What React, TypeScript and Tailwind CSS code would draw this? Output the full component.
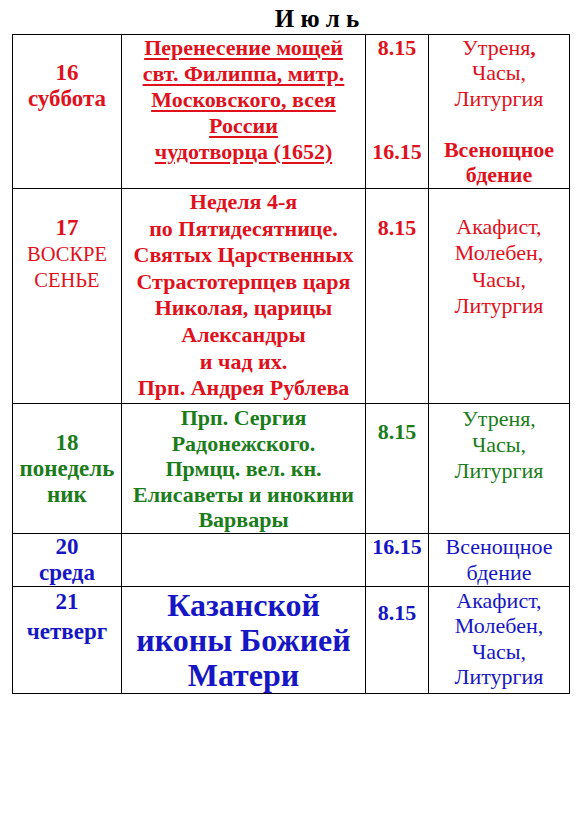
import React from 'react';

const RED = 'text-[#e0101c]';
const GREEN = 'text-[#1b7c1b]';
const BLUE = 'text-[#1616c4]';

const cell = 'border border-black align-top text-center p-0';
const day = 'text-[23px] leading-[26px]';

export default function App() {
  return (
    <div className="min-h-screen bg-white [font-family:'Liberation_Serif',serif] text-[22px] leading-[26px]">
      <div className="w-[557px] ml-[12px]">
        <h1 className="h-[34px] pl-[53px] pt-[5px] text-center text-[25px] leading-[28px] font-bold text-black">
          И ю л ь
        </h1>
        <table className="w-[557px] border-collapse table-fixed">
          <colgroup>
            <col className="w-[109px]" />
            <col className="w-[244px]" />
            <col className="w-[63px]" />
            <col className="w-[141px]" />
          </colgroup>
          <tbody>
            {/* 16 */}
            <tr className={`h-[154px] ${RED}`}>
              <td className={`${cell} ${day} pt-[25px] font-bold`}>
                <div>16</div>
                <div>суббота</div>
              </td>
              <td className={`${cell} font-bold underline decoration-[2px] underline-offset-[3px]`}>
                <div>Перенесение мощей</div>
                <div>свт. Филиппа, митр.</div>
                <div>Московского, всея</div>
                <div>России</div>
                <div>чудотворца (1652)</div>
              </td>
              <td className={`${cell} font-bold`}>
                <div>8.15</div>
                <div className="h-[78px]" />
                <div>16.15</div>
              </td>
              <td className={`${cell} leading-[25.4px]`}>
                <div>Утреня<span className="font-bold">,</span></div>
                <div>Часы,</div>
                <div>Литургия</div>
                <div className="h-[25.4px]" />
                <div className="font-bold">Всенощное</div>
                <div className="font-bold">бдение</div>
              </td>
            </tr>
            {/* 17 */}
            <tr className={`h-[215px] ${RED}`}>
              <td className={`${cell} pt-[26px]`}>
                <div className={`${day} font-bold`}>17</div>
                <div className="text-[20.5px]">ВОСКРЕ</div>
                <div className="text-[20.5px]">СЕНЬЕ</div>
              </td>
              <td className={`${cell} font-bold leading-[26.6px]`}>
                <div>Неделя 4-я</div>
                <div>по Пятидесятнице.</div>
                <div>Святых Царственных</div>
                <div>Страстотерпцев царя</div>
                <div>Николая, царицы</div>
                <div>Александры</div>
                <div>и чад их.</div>
                <div>Прп. Андрея Рублева</div>
              </td>
              <td className={`${cell} pt-[26px] font-bold`}>8.15</td>
              <td className={`${cell} pt-[25px] leading-[26.3px]`}>
                <div>Акафист,</div>
                <div>Молебен,</div>
                <div>Часы,</div>
                <div>Литургия</div>
              </td>
            </tr>
            {/* 18 */}
            <tr className={`h-[130px] ${GREEN}`}>
              <td className={`${cell} ${day} pt-[26px] font-bold`}>
                <div>18</div>
                <div>понедель</div>
                <div>ник</div>
              </td>
              <td className={`${cell} pt-[1px] font-bold leading-[25.6px]`}>
                <div>Прп. Сергия</div>
                <div>Радонежского.</div>
                <div>Прмцц. вел. кн.</div>
                <div>Елисаветы и инокини</div>
                <div>Варвары</div>
              </td>
              <td className={`${cell} pt-[15px] font-bold`}>8.15</td>
              <td className={`${cell} pt-[2px]`}>
                <div>Утреня,</div>
                <div>Часы,</div>
                <div>Литургия</div>
              </td>
            </tr>
            {/* 20 */}
            <tr className={`h-[53px] ${BLUE}`}>
              <td className={`${cell} ${day} font-bold`}>
                <div>20</div>
                <div>среда</div>
              </td>
              <td className={cell} />
              <td className={`${cell} font-bold`}>16.15</td>
              <td className={cell}>
                <div>Всенощное</div>
                <div>бдение</div>
              </td>
            </tr>
            {/* 21 */}
            <tr className={`h-[107px] ${BLUE}`}>
              <td className={`${cell} ${day} pt-[2px] font-bold`}>
                <div>21</div>
                <div className="mt-[4px]">четверг</div>
              </td>
              <td className={`${cell} pt-[1px] font-bold text-[32px] leading-[35px]`}>
                <div>Казанской</div>
                <div>иконы Божией</div>
                <div>Матери</div>
              </td>
              <td className={`${cell} pt-[13px] font-bold`}>8.15</td>
              <td className={`${cell} pt-[1px] leading-[25.3px]`}>
                <div>Акафист,</div>
                <div>Молебен,</div>
                <div>Часы,</div>
                <div>Литургия</div>
              </td>
            </tr>
          </tbody>
        </table>
      </div>
    </div>
  );
}
